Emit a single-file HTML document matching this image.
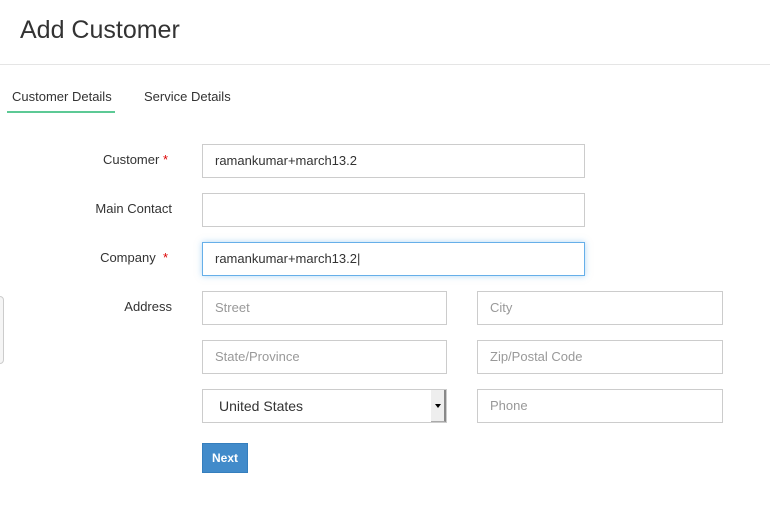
<!DOCTYPE html>
<html><head><style>
*{box-sizing:border-box;margin:0;padding:0}
body{width:770px;height:521px;background:#fff;font-family:"Liberation Sans",sans-serif;color:#333;position:relative;overflow:hidden}
.a{position:absolute}
h1{position:absolute;left:20px;top:16px;font-size:25px;font-weight:normal;color:#333}
.hr{left:0;top:64px;width:770px;height:1px;background:#e5e5e5}
.tab{font-size:13px;top:89px}
.ul{left:7px;top:111px;width:108px;height:2px;background:#5cc995}
.lbl{font-size:13px;text-align:right;width:120px}
.st{color:#d00}
.in{height:34px;border:1px solid #ccc;font-size:13px;padding:0 12px;line-height:32px;color:#333;background:#fff}
.ph{color:#999}
</style></head><body>
<h1>Add Customer</h1>
<div class="a hr"></div>
<div class="a tab" style="left:12px">Customer Details</div>
<div class="a tab" style="left:144px">Service Details</div>
<div class="a ul"></div>
<div class="a" style="left:-6px;top:296px;width:10px;height:68px;border:1px solid #ccc;border-radius:4px;background:#f5f5f5"></div>

<div class="a lbl" style="left:48px;top:152px">Customer <span class="st">*</span></div>
<div class="a in" style="left:202px;top:144px;width:383px">ramankumar+march13.2</div>
<div class="a lbl" style="left:52px;top:201px">Main Contact</div>
<div class="a in" style="left:202px;top:193px;width:383px"></div>
<div class="a lbl" style="left:48px;top:250px">Company &nbsp;<span class="st">*</span></div>
<div class="a in" style="left:202px;top:242px;width:383px;border-color:#66afe9;box-shadow:0 0 6px rgba(102,175,233,.5)">ramankumar+march13.2|</div>
<div class="a lbl" style="left:52px;top:299px">Address</div>
<div class="a in ph" style="left:202px;top:291px;width:245px">Street</div>
<div class="a in ph" style="left:477px;top:291px;width:246px">City</div>
<div class="a in ph" style="left:202px;top:340px;width:245px">State/Province</div>
<div class="a in ph" style="left:477px;top:340px;width:246px">Zip/Postal Code</div>
<div class="a in" style="left:202px;top:389px;width:245px;font-size:14px;padding-left:16px">United States
<div class="a" style="right:0;top:0;width:15px;height:32px;background:#eee;border-right:2px solid #888;border-bottom:1px solid #aaa"><div class="a" style="left:4px;top:14px;border-left:3px solid transparent;border-right:3px solid transparent;border-top:4px solid #000"></div></div></div>
<div class="a in ph" style="left:477px;top:389px;width:246px">Phone</div>
<div class="a" style="left:202px;top:443px;width:46px;height:30px;background:#428bca;border:1px solid #357ebd;color:#fff;font-size:12px;font-weight:bold;text-align:center;line-height:28px">Next</div>
</body></html>
